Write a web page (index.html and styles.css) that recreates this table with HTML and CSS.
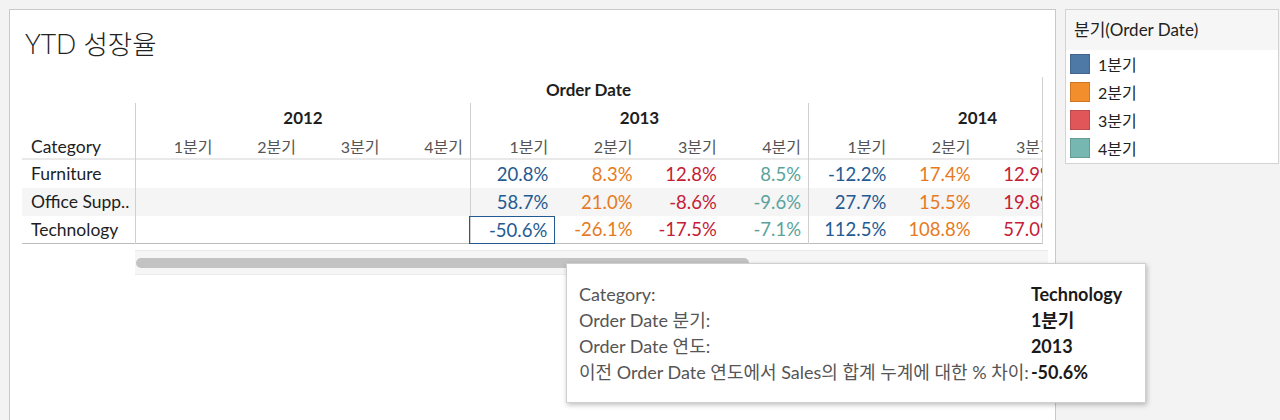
FILE: index.html
```html
<!DOCTYPE html>
<html lang="ko">
<head>
<meta charset="utf-8">
<title>YTD 성장율</title>
<link rel="stylesheet" href="styles.css">
</head>
<body>
<div class="page">
  <section class="panel">
    <h1 class="title">YTD 성장율</h1>
    <div class="viz">
      <div class="rowhdr">
        <div class="sp-top"></div>
        <div class="hcell">Category</div>
        <div class="rcell">Furniture</div>
        <div class="rcell alt">Office Supp..</div>
        <div class="rcell last">Technology</div>
      </div>
      <div class="pane">
        <div class="pane-title">Order Date</div>
        <div class="years">
          <div class="year y2012">
            <div class="ylabel">2012</div>
            <div class="qrow head"><span>1분기</span><span>2분기</span><span>3분기</span><span>4분기</span></div>
            <div class="qrow"><span></span><span></span><span></span><span></span></div>
            <div class="qrow alt"><span></span><span></span><span></span><span></span></div>
            <div class="qrow last"><span></span><span></span><span></span><span></span></div>
          </div>
          <div class="year y2013">
            <div class="ylabel">2013</div>
            <div class="qrow head"><span>1분기</span><span>2분기</span><span>3분기</span><span>4분기</span></div>
            <div class="qrow"><span class="q1">20.8%</span><span class="q2">8.3%</span><span class="q3">12.8%</span><span class="q4">8.5%</span></div>
            <div class="qrow alt"><span class="q1">58.7%</span><span class="q2">21.0%</span><span class="q3">-8.6%</span><span class="q4">-9.6%</span></div>
            <div class="qrow last"><span class="q1 sel">-50.6%</span><span class="q2">-26.1%</span><span class="q3">-17.5%</span><span class="q4">-7.1%</span></div>
          </div>
          <div class="year y2014">
            <div class="ylabel">2014</div>
            <div class="qrow head"><span>1분기</span><span>2분기</span><span>3분기</span></div>
            <div class="qrow"><span class="q1">-12.2%</span><span class="q2">17.4%</span><span class="q3">12.9%</span></div>
            <div class="qrow alt"><span class="q1">27.7%</span><span class="q2">15.5%</span><span class="q3">19.8%</span></div>
            <div class="qrow last"><span class="q1">112.5%</span><span class="q2">108.8%</span><span class="q3">57.0%</span></div>
          </div>
        </div>
      </div>
    </div>
    <div class="hscroll"><div class="thumb"></div></div>
  </section>
  <aside class="legend">
    <div class="legend-head">분기(Order Date)</div>
    <ul class="legend-list">
      <li><i class="sw s1"></i>1분기</li>
      <li><i class="sw s2"></i>2분기</li>
      <li><i class="sw s3"></i>3분기</li>
      <li><i class="sw s4"></i>4분기</li>
    </ul>
  </aside>
</div>
<div class="tooltip">
  <div class="tt-grid">
    <span class="k">Category:</span><span class="v">Technology</span>
    <span class="k">Order Date 분기:</span><span class="v">1분기</span>
    <span class="k">Order Date 연도:</span><span class="v">2013</span>
    <span class="k">이전 Order Date 연도에서 Sales의 합계 누계에 대한 % 차이:</span><span class="v">-50.6%</span>
  </div>
</div>
</body>
</html>
```
FILE: styles.css
```css
* { box-sizing: border-box; }
html, body { margin: 0; padding: 0; }
body {
  background: #f3f3f3;
  font-family: Lato, "Noto Sans CJK KR", sans-serif;
  color: #222;
  width: 1280px;
  height: 420px;
  overflow: hidden;
  position: relative;
}
.page {
  display: flex;
  align-items: flex-start;
  padding: 9px 0 0 9px;
  gap: 9px;
}
.panel {
  width: 1047px;
  height: 430px;
  background: #fff;
  border: 1px solid #c9c9c9;
  padding: 0 0 0 12px;
}
.title {
  margin: 0;
  padding: 18px 0 0 3px;
  height: 67px;
  font-size: 26.5px;
  font-weight: 300;
  color: #222;
  line-height: 32px;
}
.viz {
  display: flex;
  align-items: flex-start;
}
.rowhdr { width: 113px; flex: none; }
.sp-top { height: 56px; }
.hcell, .rcell {
  padding-left: 9px;
  font-size: 17.5px;
  color: #1e1e1e;
  white-space: nowrap;
}
.hcell { height: 27px; line-height: 27px; border-bottom: 2px solid #e9e9e9; }
.rcell { height: 28px; line-height: 28px; }
.rcell.last { height: 28px; line-height: 27px; border-bottom: 1px solid #bdbdbd; }
.alt { background: #f5f5f5; }
.pane {
  width: 908px;
  flex: none;
  overflow: hidden;
  border-right: 1px solid #d0d0d0;
}
.pane-title {
  height: 26px;
  line-height: 26px;
  text-align: center;
  font-size: 17px;
  font-weight: 700;
  color: #1e1e1e;
}
.years { display: flex; }
.year { flex: none; border-left: 1px solid #d0d0d0; }
.y2012 { width: 335px; }
.y2013 { width: 338px; }
.y2014 { width: 338px; }
.ylabel {
  height: 30px;
  line-height: 30px;
  text-align: center;
  font-size: 17px;
  font-weight: 700;
  color: #1e1e1e;
}
.qrow {
  display: grid;
  grid-template-columns: repeat(4, 1fr);
  height: 28px;
}
.qrow span {
  text-align: right;
  padding-right: 7px;
  font-size: 18.5px;
  line-height: 28px;
  white-space: nowrap;
}
.qrow.head { height: 27px; border-bottom: 2px solid #e9e9e9; }
.qrow.head span { color: #555; font-size: 16px; font-weight: 400; line-height: 28px; }
.qrow.last { border-bottom: 1px solid #bdbdbd; }
.qrow.last span { line-height: 26px; }
.q1 { color: #245a92; }
.q2 { color: #e67a22; }
.q3 { color: #c52036; }
.q4 { color: #5aa39c; }
.sel { border: 1px solid #245a92; margin-left: -2px; }
.hscroll {
  margin: 6px 0 0 113px;
  width: 913px;
  height: 25px;
  background: #f6f6f6;
  border-top: 1px solid #e9e9e9;
  border-bottom: 1px solid #ececec;
  padding: 7px 0 0 1px;
}
.thumb {
  width: 613px;
  height: 10px;
  border-radius: 5px;
  background: #c3c3c3;
}
.legend {
  width: 214px;
  background: #fff;
  border: 1px solid #d3d3d3;
  padding-bottom: 1px;
}
.legend-head {
  height: 40px;
  background: #f6f6f6;
  padding-left: 8px;
  line-height: 40px;
  font-size: 17px;
  color: #222;
}
.legend-list { list-style: none; margin: 0; padding: 0 0 0 4px; }
.legend-list li {
  display: flex;
  align-items: center;
  height: 28px;
  font-size: 16px;
  color: #222;
}
.sw {
  width: 20px;
  height: 20px;
  margin-right: 8px;
  border: 1px solid rgba(0,0,0,0.15);
}
.s1 { background: #4e79a7; }
.s2 { background: #f28e2b; }
.s3 { background: #e15759; }
.s4 { background: #76b7b2; }
.tooltip {
  position: absolute;
  left: 566px;
  top: 263px;
  width: 580px;
  height: 140px;
  background: #fff;
  border: 1px solid #cfcfcf;
  box-shadow: 1px 2px 5px rgba(0,0,0,0.25);
  padding: 17px 0 0 12px;
}
.tt-grid {
  display: grid;
  grid-template-columns: max-content max-content;
  row-gap: 0;
}
.tt-grid span { font-size: 18px; line-height: 26px; white-space: nowrap; }
.tt-grid .k { color: #555; font-weight: 400; }
.tt-grid .v { color: #1a1a1a; font-weight: 700; padding-left: 2px; }
```
